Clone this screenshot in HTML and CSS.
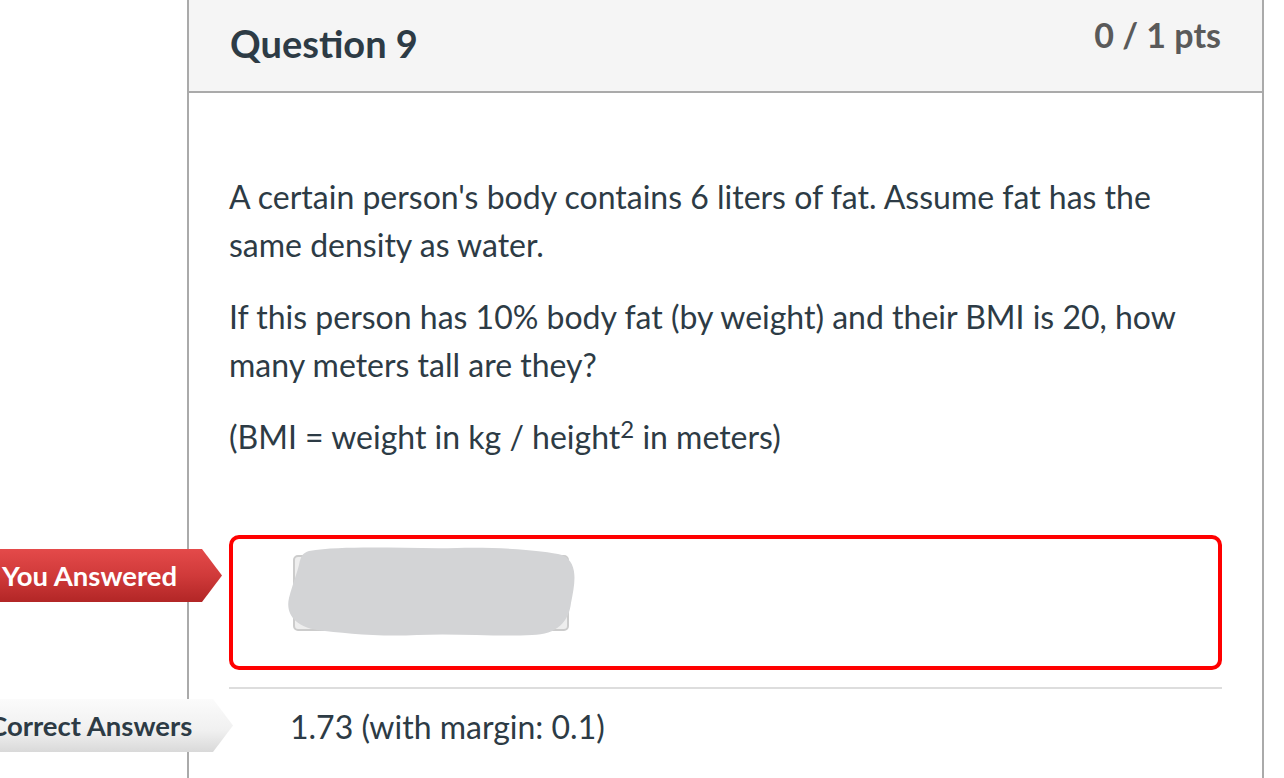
FILE: index.html
```html
<!DOCTYPE html>
<html>
<head>
<meta charset="utf-8">
<link rel="stylesheet" href="styles.css">
</head>
<body>
<div class="page">
  <div class="question">
    <div class="header">
      <h2 class="title">Question 9</h2>
      <div class="points">0 / 1 pts</div>
    </div>
    <div class="body">
      <p>A certain person's body contains 6 liters of fat. Assume fat has the same density as water.</p>
      <p>If this person has 10% body fat (by weight) and their BMI is 20, how many meters tall are they?</p>
      <p>(BMI = weight in kg / height<sup>2</sup> in meters)</p>
      <div class="answers">
        <div class="answer-box">
          <div class="tag tag-wrong">You Answered</div>
          <svg class="hidden-answer" width="290" height="95" viewBox="0 0 290 95">
            <rect x="7" y="13" width="274" height="74" rx="4" fill="#eeeeee" stroke="#cccccc" stroke-width="2"/>
            <path d="M22 8 C60 2 120 6 170 5 C220 4 260 8 275 12 C292 20 288 40 284 60 C282 78 270 92 245 92 C210 94 170 90 130 92 C90 94 55 90 30 87 C10 84 -2 72 2 55 C6 40 10 30 12 22 C14 12 16 10 22 8 Z" fill="#d3d4d6"/>
          </svg>
        </div>
        <div class="divider"></div>
        <div class="correct-row">
          <div class="tag tag-correct">Correct Answers</div>
          <span class="correct-text">1.73 (with margin: 0.1)</span>
        </div>
      </div>
    </div>
  </div>
</div>
</body>
</html>
```
FILE: styles.css
```css
html, body {
  margin: 0;
  padding: 0;
  background: #ffffff;
}
body {
  font-family: Lato, "Noto Sans", sans-serif;
  color: #2d3b45;
  overflow: hidden;
  height: 778px;
}
.page {
  padding-left: 187px;
  width: 1077px;
}
.question {
  border-left: 2px solid #aaaaaa;
  border-right: 2px solid #aaaaaa;
  min-height: 778px;
}
.header {
  background: #f5f5f5;
  height: 91px;
  border-bottom: 2px solid #aaaaaa;
  display: flex;
  justify-content: space-between;
  align-items: flex-start;
  padding: 0 41px;
}
.title {
  margin: 24px 0 0 0;
  font-size: 38px;
  line-height: 38px;
  font-weight: 700;
  color: #2d3b45;
}
.points {
  margin-top: 18px;
  font-size: 34px;
  line-height: 34px;
  font-weight: 700;
  color: #5a5a5a;
}
.body {
  padding: 80px 40px 0 40px;
}
.body p {
  margin: 0 0 24px 0;
  font-size: 32px;
  line-height: 48px;
}
.body sup {
  font-size: 24px;
  line-height: 0;
  vertical-align: 0.45em;
}
.answers {
  margin-top: 74px;
}
.answer-box {
  position: relative;
  height: 123px;
  border: 4px solid #ff0000;
  border-radius: 10px;
  padding: 4px 0 0 54px;
}
.answer-box .hidden-answer {
  display: block;
}
.divider {
  margin-top: 17px;
  height: 2px;
  background: #dddddd;
}
.correct-row {
  position: relative;
  padding: 14px 0 0 61px;
  font-size: 32px;
  line-height: 48px;
}
.tag {
  position: absolute;
  height: 53px;
  line-height: 53px;
  font-size: 27.5px;
  font-weight: 700;
  white-space: nowrap;
  box-sizing: border-box;
  clip-path: polygon(0 0, calc(100% - 20px) 0, 100% 50%, calc(100% - 20px) 100%, 0 100%);
}
.tag-wrong {
  top: 10px;
  right: calc(100% + 11px);
  width: 240px;
  padding-left: 20px;
  color: #ffffff;
  background: linear-gradient(to bottom, #e44a4a 0%, #d03a3a 50%, #b22626 100%);
}
.tag-correct {
  top: 10px;
  right: calc(100% - 4px);
  width: 250px;
  padding-left: 6px;
  color: #2d3b45;
  background: linear-gradient(to bottom, #fbfbfb 0%, #f0f0f0 60%, #d9d9d9 100%);
}
```
